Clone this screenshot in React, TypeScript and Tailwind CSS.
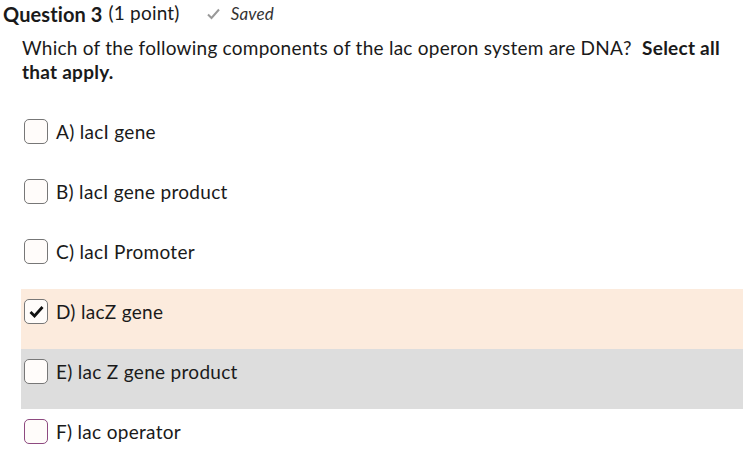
import React from "react";

const options = [
  { label: "A) lacI gene", checked: false, bg: "" },
  { label: "B) lacI gene product", checked: false, bg: "" },
  { label: "C) lacI Promoter", checked: false, bg: "" },
  { label: "D) lacZ gene", checked: true, bg: "bg-[#fcebdd]" },
  { label: "E) lac Z gene product", checked: false, bg: "bg-[#dddddd]" },
  { label: "F) lac operator", checked: false, bg: "", focus: true },
];

export default function App() {
  return (
    <div className="w-[747px] h-[449px] overflow-hidden bg-white text-[#1a1a1a]" style={{ fontFamily: "Lato, 'Open Sans', sans-serif" }}>
      <div className="flex items-center h-[27px] pl-[3px]">
        <span className="text-[20px] font-bold tracking-[0.1px]">Question 3</span>
        <span className="text-[19px] ml-[6px] tracking-[0.2px]">(1 point)</span>
        <svg className="ml-[27px] mt-[1px]" width="13" height="12" viewBox="0 0 13 12">
          <path d="M1 6.5 L4.5 10 L12 1.5" fill="none" stroke="#999" strokeWidth="2" />
        </svg>
        <span className="ml-[11px] text-[17px] italic text-[#333] tracking-[0.2px]">Saved</span>
      </div>
      <div className="pl-[22px] pr-[20px] pt-[9px] text-[19px] leading-[24px] tracking-[0.25px]">
        Which of the following components of the lac operon system are DNA?&nbsp;&nbsp;<b>Select all that apply.</b>
      </div>
      <div className="mt-[25px] ml-[21px] mr-[4px] flex flex-col">
        {options.map((o) => (
          <div key={o.label} className={`h-[60px] flex items-start pt-[10px] pl-[3px] ${o.bg}`}>
            <div
              className={`w-[24px] h-[25px] rounded-[5px] border-[1.5px] flex items-center justify-center bg-[#fffcfa] ${
                o.focus ? "border-[#8e4a80]" : "border-[#777]"
              }`}
            >
              {o.checked && (
                <svg width="15" height="13" viewBox="0 0 15 13">
                  <path d="M1.5 7 L5.5 11 L13.5 2" fill="none" stroke="#111" strokeWidth="2.8" />
                </svg>
              )}
            </div>
            <span className="ml-[8px] mt-[1px] text-[19px] leading-[24px] tracking-[0.3px]">{o.label}</span>
          </div>
        ))}
      </div>
    </div>
  );
}
